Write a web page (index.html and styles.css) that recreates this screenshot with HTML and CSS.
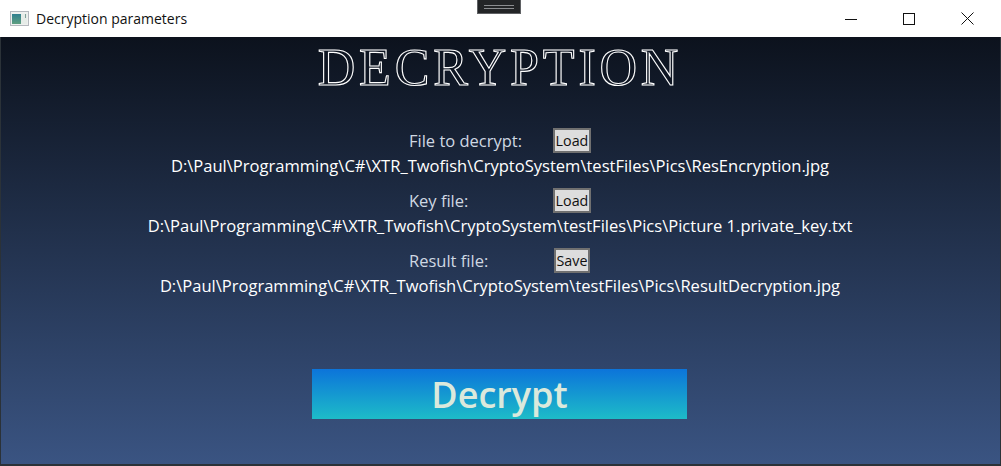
FILE: index.html
```html
<!DOCTYPE html>
<html lang="en">
<head>
<meta charset="utf-8">
<title>Decryption parameters</title>
<link rel="stylesheet" href="styles.css">
</head>
<body>
<div class="window">
  <header class="titlebar">
    <div class="title-left">
      <svg class="app-icon" width="19" height="15" viewBox="0 0 19 15">
        <defs><linearGradient id="g" x1="0" y1="0" x2="0" y2="1"><stop offset="0" stop-color="#2f7f8f"/><stop offset="1" stop-color="#5f9f80"/></linearGradient></defs>
        <rect x="0.5" y="0.5" width="18" height="14" fill="#eef0ef" stroke="#b4b8be"/>
        <rect x="2" y="3" width="9" height="10" fill="url(#g)"/>
        <rect x="11" y="3" width="6" height="10" fill="#e6ece8"/>
        <rect x="15" y="3" width="1" height="4" fill="#7f9f9a"/>
      </svg>
      <span class="title-text">Decryption parameters</span>
    </div>
    <div class="handle"><div class="handle-lines"></div></div>
    <div class="caption">
      <span class="cap-btn"><svg width="12" height="12" viewBox="0 0 12 12"><path d="M0 6.5H12" stroke="#111" fill="none"/></svg></span>
      <span class="cap-btn"><svg width="12" height="12" viewBox="0 0 12 12"><rect x="0.5" y="0.5" width="11" height="11" stroke="#111" fill="none"/></svg></span>
      <span class="cap-btn"><svg width="13" height="13" viewBox="0 0 13 13"><path d="M0.5 0.5L12.5 12.5M12.5 0.5L0.5 12.5" stroke="#111" fill="none"/></svg></span>
    </div>
  </header>
  <main class="content">
    <h1 class="heading">DECRYPTION</h1>
    <section class="fields">
      <div class="field">
        <div class="field-row"><span class="label">File to decrypt:</span><span class="btn-slot"><button class="small-btn">Load</button></span></div>
        <div class="path">D:\Paul\Programming\C#\XTR_Twofish\CryptoSystem\testFiles\Pics\ResEncryption.jpg</div>
      </div>
      <div class="field">
        <div class="field-row"><span class="label">Key file:</span><span class="btn-slot"><button class="small-btn">Load</button></span></div>
        <div class="path">D:\Paul\Programming\C#\XTR_Twofish\CryptoSystem\testFiles\Pics\Picture 1.private_key.txt</div>
      </div>
      <div class="field">
        <div class="field-row"><span class="label">Result file:</span><span class="btn-slot"><button class="small-btn">Save</button></span></div>
        <div class="path">D:\Paul\Programming\C#\XTR_Twofish\CryptoSystem\testFiles\Pics\ResultDecryption.jpg</div>
      </div>
    </section>
    <button class="decrypt">Decrypt</button>
  </main>
</div>
</body>
</html>
```
FILE: styles.css
```css
* { box-sizing: border-box; }
html, body { margin: 0; height: 100%; overflow: hidden; }
body { background: #fff; font-family: "Open Sans", "Noto Sans", sans-serif; }
.window { width: 1001px; height: 466px; display: flex; flex-direction: column; }
.titlebar { height: 37px; flex: none; background: #fff; display: flex; align-items: center; justify-content: space-between; position: relative; padding-left: 10px; }
.title-left { display: flex; align-items: center; gap: 7px; }
.title-text { font-size: 14px; color: #111; }
.handle { position: absolute; left: 477px; top: 0; width: 44px; height: 14px; background: #232527; border: 1px solid #5f6164; border-top: 0; display: flex; align-items: center; justify-content: center; }
.handle-lines { width: 30px; height: 4px; border-top: 1px solid #8b8d90; border-bottom: 1px solid #8b8d90; }
.caption { display: flex; align-items: center; padding-right: 4px; }
.cap-btn { width: 58.5px; display: flex; justify-content: center; align-items: center; }
.content { flex: 1; display: flex; flex-direction: column; align-items: center; padding-right: 1px; background: linear-gradient(#0c121d, #3a5482); border-left: 1px solid #2b3238; border-right: 1px solid #2b3238; border-bottom: 2px solid #2b3238; }
.heading { margin: 0; font-family: "Liberation Serif", serif; font-weight: 400; color: #0e1522; -webkit-text-stroke: 1.1px #fff; font-size: 52px; line-height: 62px; height: 61px; letter-spacing: 3.8px; }
.fields { margin-top: 29px; display: flex; flex-direction: column; gap: 9px; align-items: center; }
.field { display: flex; flex-direction: column; align-items: center; }
.field-row { display: flex; align-items: center; justify-content: space-between; height: 26px; width: 182px; }
.label { font-size: 16.5px; color: #cfd8e2; }
.btn-slot { width: 38px; display: flex; justify-content: center; }
.path { font-size: 16.55px; color: #fff; line-height: 25px; white-space: nowrap; }
.small-btn { font: 14.3px "Open Sans", sans-serif; color: #111; background: #dddddd; border: 2px solid #707070; height: 25px; padding: 0 1px; }
.decrypt { margin: 71px 1px 0 0; width: 375px; height: 50px; border: 0; background: linear-gradient(#0c74da, #1dbcc8); color: #dbe9dc; font: 600 36px "Open Sans", sans-serif; }
```
